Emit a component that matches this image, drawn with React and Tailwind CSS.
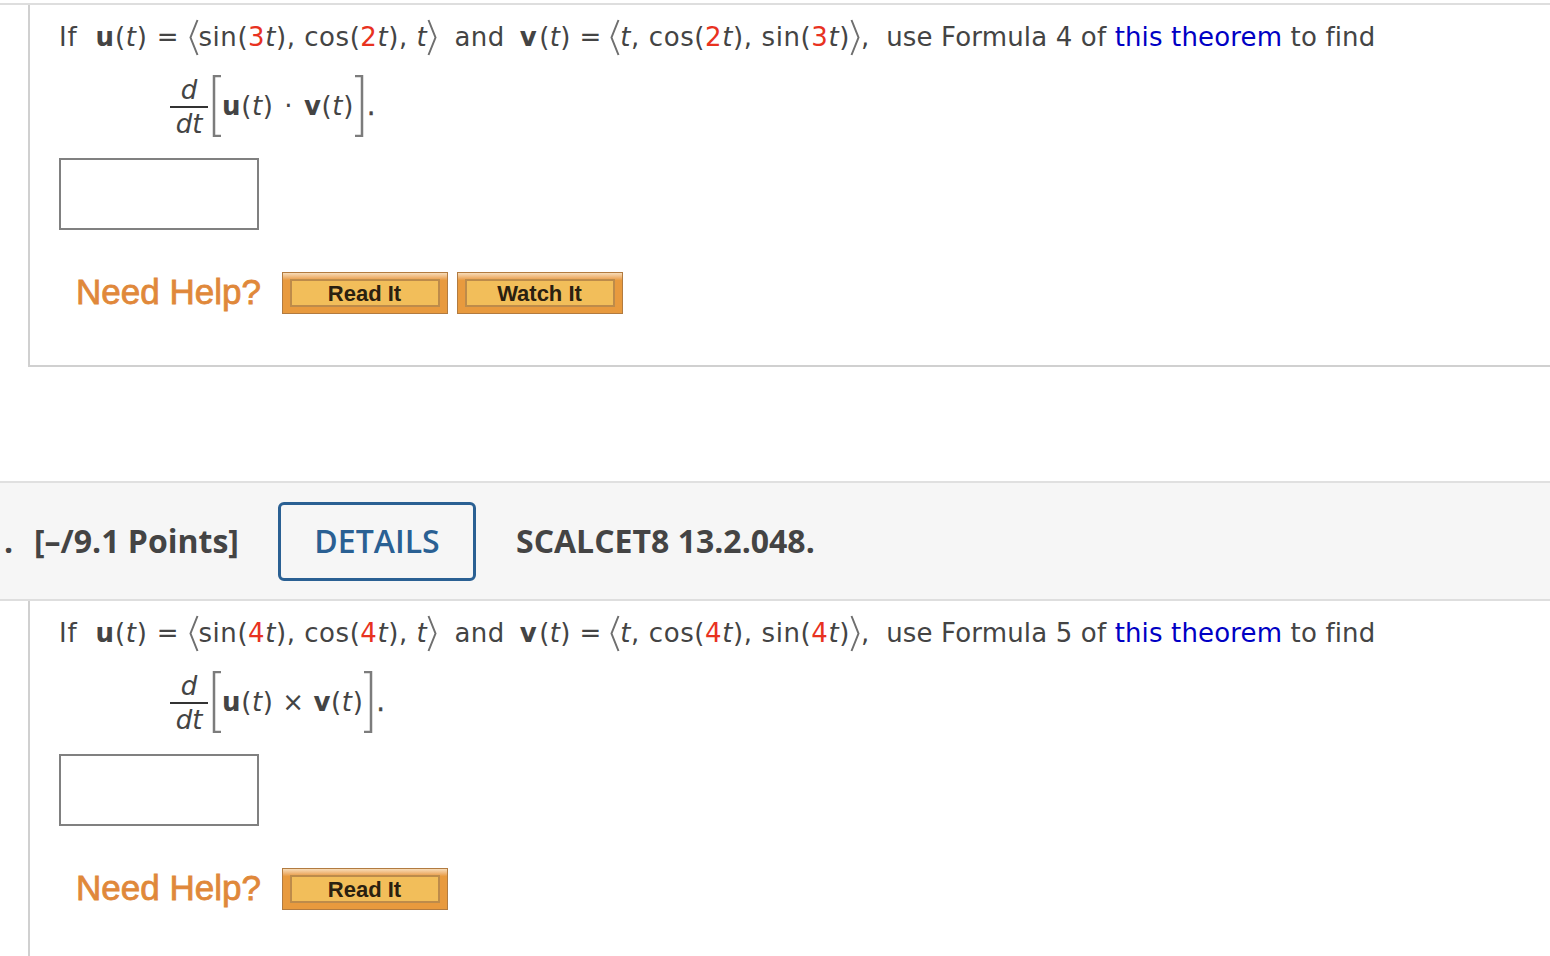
const I = ({ children }) => <i className="italic">{children}</i>;
const R = ({ children }) => <span className="text-[#e8321f]">{children}</span>;
const B = ({ children }) => <b className="font-bold">{children}</b>;

const Angle = ({ right }) => (
  <svg width="10" height="37" viewBox="0 0 10 37" className="shrink-0" fill="none">
    <path d={right ? "M1.5 1 L8.5 18.5 L1.5 36" : "M8.5 1 L1.5 18.5 L8.5 36"} stroke="#6f6f6f" strokeWidth="2" />
  </svg>
);

const Square = ({ right }) => (
  <svg width="9" height="62" viewBox="0 0 9 62" className="shrink-0" fill="none">
    <path d={right ? "M0 1 H7 V61 H0" : "M9 1 H2 V61 H9"} stroke="#7c7c7c" strokeWidth="2.5" />
  </svg>
);

function Button({ label }) {
  return (
    <div className="w-[166px] h-[42px] border border-[#b27b40] px-[7px] pt-[6px] pb-[6px] bg-gradient-to-b from-[#f7dcb8] from-0% to-[#e89a3e] to-[18%]">
      <div className="h-full border-2 border-[#bd8b4a] bg-[#f2be5a] flex items-center justify-center font-['Liberation_Sans',sans-serif] font-bold text-[22px] text-[#2a2010] pr-[1px]">
        {label}
      </div>
    </div>
  );
}

function Question({ a, b, c, n, op, buttons, h }) {
  return (
    <section className={`border-t-2 border-[#dedede] ${h}`}>
      <div className="ml-[28px] h-full border-l-2 border-b-2 border-[#d0d0d0] pl-[29px] pt-[14px] font-['DejaVu_Sans',sans-serif] text-[#444] text-[26px]">
        <div className="flex items-center h-[36px] whitespace-pre">
          <span className="tracking-[0.8px]">If  <B>u</B>(<I>t</I>) = </span>
          <Angle />
          <span className="tracking-[0.55px]">sin(<R>{a}</R><I>t</I>), cos(<R>{b}</R><I>t</I>), <I>t</I></span>
          <Angle right />
          <span className="tracking-[0.37px]">  and  <b className="font-bold -ml-[2px] mr-[2px]">v</b>(<I>t</I>) = </span>
          <Angle />
          <span className="tracking-[0.6px]"><I>t</I>, cos(<R>{b}</R><I>t</I>), sin(<R>{c}</R><I>t</I>)</span>
          <Angle right />
          <span className="tracking-[0.15px] ml-[1px]">,  use Formula {n} of <a className="text-[#0000c4]">this theorem</a> to find</span>
        </div>
        <div className="flex items-center h-[62px] mt-[20px] ml-[111px] whitespace-pre">
          <div className="flex flex-col items-center w-[38px] mr-[4px] text-[26px] leading-[30px] pt-[2px]">
            <I>d</I>
            <div className="w-full h-[2px] bg-[#333] my-[1px]" />
            <I>dt</I>
          </div>
          <Square />
          <span className="mx-[1px] tracking-[0.6px]"><B>u</B>(<I>t</I>) {op} <B>v</B>(<I>t</I>)</span>
          <Square right />
          <span className="ml-[3px] [-webkit-text-stroke:0.5px_#444]">.</span>
        </div>
        <div className="w-[200px] h-[72px] border-2 border-[#808080] bg-white mt-[21px]" />
        <div className="flex items-center mt-[36px] ml-[17px]">
          <span className="font-['Liberation_Sans',sans-serif] text-[35px] text-[#e0883a] [-webkit-text-stroke:0.8px_#e0883a] mr-[20px] w-[186px] pb-[2px]">Need Help?</span>
          <div className="flex gap-[9px]">
            {buttons.map((x) => <Button key={x} label={x} />)}
          </div>
        </div>
      </div>
    </section>
  );
}

export default function App() {
  return (
    <div className="w-[1550px] h-[956px] overflow-hidden bg-white pt-[3px]">
      <Question a="3" b="2" c="3" n="4" op={<span className="mx-[2px]">·</span>} buttons={["Read It", "Watch It"]} h="h-[364px]" />
      <header className="mt-[114px] h-[120px] border-y-2 border-[#e0e0e0] bg-[#f6f6f6] flex items-center font-['Open_Sans',sans-serif] text-[32px] text-[#444] font-bold whitespace-pre pl-[4px]">
        <span className="w-[30px]">.</span>
        <span className="w-[244px]">[–/9.1 Points]</span>
        <span className="w-[198px] h-[79px] border-[3px] border-[#2a6093] rounded-[6px] flex items-center justify-center text-[#2a6093] font-semibold">DETAILS</span>
        <span className="ml-[40px]">SCALCET8 13.2.048.</span>
      </header>
      <Question a="4" b="4" c="4" n="5" op="×" buttons={["Read It"]} h="h-[400px] -mt-[2px]" />
    </div>
  );
}
